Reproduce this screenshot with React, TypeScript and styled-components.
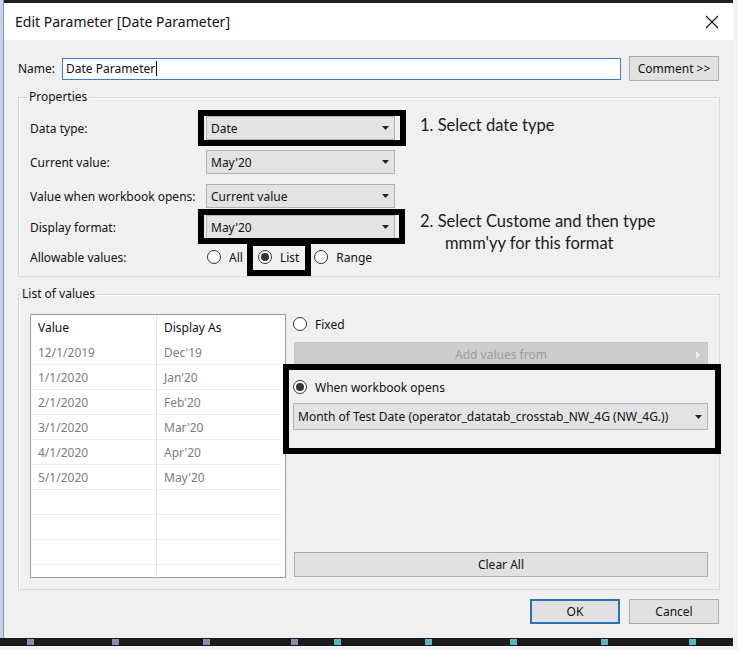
import React from "react";
import styled, { createGlobalStyle } from "styled-components";

const Global = createGlobalStyle`
  html, body { margin: 0; padding: 0; background: #f4f4f4; }
  body { font-family: "Noto Sans", "Open Sans", sans-serif; font-size: 12px; color: #111; }
  * { box-sizing: border-box; }
`;

const Screen = styled.div`
  width: 738px;
  height: 650px;
  display: flex;
  flex-direction: column;
  background: #f4f4f4;
  overflow: hidden;
`;

const WindowRow = styled.div`
  display: flex;
  height: 638px;
`;

const LeftEdge = styled.div`
  width: 4px;
  background: #c9d1e2;
  border-right: 1px solid #8493b4;
`;

const Dialog = styled.div`
  width: 729px;
  display: flex;
  flex-direction: column;
  border-top: 3px solid #1f1f29;
`;

const TitleBar = styled.div`
  height: 37px;
  background: #ffffff;
  display: flex;
  align-items: center;
  justify-content: space-between;
  padding: 0 14px 0 11px;
`;

const Title = styled.div`
  font-size: 14px;
  color: #111;
`;

const Body = styled.div`
  flex: 1;
  background: #f0f0f0;
  padding: 16px 13px 0 14px;
  display: flex;
  flex-direction: column;
`;

const NameRow = styled.div`
  display: flex;
  align-items: center;
  height: 25px;
`;

const NameLabel = styled.div`
  width: 44px;
`;

const NameInput = styled.div`
  width: 559px;
  height: 22px;
  border: 1px solid #3a80c0;
  background: #fff;
  display: flex;
  align-items: center;
  padding-left: 3px;
`;

const Caret = styled.span`
  display: inline-block;
  width: 1px;
  height: 15px;
  background: #000;
  margin-left: 1px;
`;

const Button = styled.div<{ $w?: number; $primary?: boolean }>`
  width: ${(p) => p.$w ?? 90}px;
  height: 25px;
  background: #e1e1e1;
  border: ${(p) => (p.$primary ? "2px solid #2b72b8" : "1px solid #adadad")};
  display: flex;
  align-items: center;
  justify-content: center;
  color: #111;
`;

const CommentButton = styled(Button)`
  margin-left: 8px;
`;

const Group = styled.div<{ $mt: number }>`
  position: relative;
  margin-top: ${(p) => p.$mt}px;
  border: 1px solid #d8d8d8;
  box-shadow: inset 1px 1px 0 #fbfbfb;
`;

const Legend = styled.span<{ $left: number }>`
  position: absolute;
  top: -10px;
  left: ${(p) => p.$left}px;
  padding: 0 2px;
  background: #f0f0f0;
  line-height: 18px;
`;

const PropGrid = styled.div`
  display: grid;
  grid-template-columns: 176px 189px auto;
  grid-template-rows: 34px 34px 34px 28px 32px;
  align-items: center;
  padding: 13px 11px 3px 11px;
`;

const Label = styled.div`
  grid-column: 1;
`;

const Annotation = styled.div<{ $row: string; $mt: number }>`
  grid-column: 3;
  grid-row: ${(p) => p.$row};
  align-self: start;
  margin-top: ${(p) => p.$mt}px;
  margin-left: 25px;
  font-family: "Lato", "Noto Sans", sans-serif;
  font-size: 16.5px;
  line-height: 22px;
  color: #1a1a1a;
`;

const Indent = styled.div`
  padding-left: 25px;
`;

const Highlight = styled.div<{ $t: number; $r: number; $b: number; $l: number }>`
  position: relative;
  &::after {
    content: "";
    position: absolute;
    top: ${(p) => p.$t}px;
    right: ${(p) => p.$r}px;
    bottom: ${(p) => p.$b}px;
    left: ${(p) => p.$l}px;
    border: 6px solid #000;
    pointer-events: none;
  }
`;

const SelectBox = styled.div<{ $h?: number }>`
  height: ${(p) => p.$h ?? 24}px;
  background: #e3e3e3;
  border: 1px solid #b3b3b3;
  display: flex;
  align-items: center;
  justify-content: space-between;
  padding: 0 5px 0 4px;
  color: #111;
  white-space: nowrap;
`;

const DownArrow = () => (
  <svg width="7" height="4" viewBox="0 0 7 4">
    <polygon points="0,0 7,0 3.5,4" fill="#222" />
  </svg>
);

const Select = ({ value, h }: { value: string; h?: number }) => (
  <SelectBox $h={h}>
    <span>{value}</span>
    <DownArrow />
  </SelectBox>
);

const RadioGroup = styled.div`
  display: flex;
  align-items: center;
  gap: 15px;
  margin-left: 1px;
  white-space: nowrap;
`;

const RadioItem = styled.div`
  display: flex;
  align-items: center;
  gap: 8px;
  height: 16px;
`;

const Circle = styled.span<{ $on?: boolean }>`
  width: 14px;
  height: 14px;
  border-radius: 50%;
  border: 1px solid #333;
  background: #fff;
  display: flex;
  align-items: center;
  justify-content: center;
  flex: none;
  &::after {
    content: "";
    width: 8px;
    height: 8px;
    border-radius: 50%;
    background: ${(p) => (p.$on ? "#333" : "transparent")};
  }
`;

const Radio = ({ label, on }: { label: string; on?: boolean }) => (
  <RadioItem>
    <Circle $on={on} />
    <span>{label}</span>
  </RadioItem>
);

const ListLayout = styled.div`
  display: flex;
  padding: 19px 11px 11px 11px;
`;

const Table = styled.div`
  width: 256px;
  height: 264px;
  border: 1px solid #9d9d9d;
  background: #fff;
  overflow: hidden;
`;

const TRow = styled.div<{ $head?: boolean }>`
  display: grid;
  grid-template-columns: 126px 1fr;
  height: 25px;
  border-bottom: 1px solid ${(p) => (p.$head ? "transparent" : "#ececec")};
  margin-right: 4px;
  color: ${(p) => (p.$head ? "#111" : "#7d7d7d")};
`;

const TCell = styled.div`
  display: flex;
  align-items: center;
  padding-left: 7px;
  &:first-child {
    border-right: 1px solid #e4e4e4;
  }
`;

const RightCol = styled.div`
  width: 415px;
  margin-left: 7px;
  display: flex;
  flex-direction: column;
`;

const RadioRow = styled.div<{ $mt: number }>`
  height: 20px;
  display: flex;
  align-items: center;
  margin-top: ${(p) => p.$mt}px;
`;

const WideButton = styled.div<{ $disabled?: boolean; $mt?: number; $mb?: number }>`
  margin-left: 1px;
  margin-top: ${(p) => (p.$mt === undefined ? "auto" : `${p.$mt}px`)};
  margin-bottom: ${(p) => p.$mb ?? 0}px;
  height: 25px;
  background: ${(p) => (p.$disabled ? "#cdcdcd" : "#e1e1e1")};
  border: 1px solid ${(p) => (p.$disabled ? "#c4c4c4" : "#adadad")};
  color: ${(p) => (p.$disabled ? "#9c9c9c" : "#111")};
  display: flex;
  align-items: center;
  justify-content: center;
  position: relative;
`;

const SideArrow = styled.span`
  position: absolute;
  right: 7px;
  top: 8px;
  width: 0;
  height: 0;
  border-top: 4px solid transparent;
  border-bottom: 4px solid transparent;
  border-left: 4px solid #f2f2f2;
`;

const WhenSelectWrap = styled.div`
  margin-top: 6px;
`;

const Footer = styled.div`
  display: flex;
  justify-content: flex-end;
  gap: 9px;
  margin-top: 9px;
  padding-right: 1px;
`;

const Taskbar = styled.div`
  position: relative;
  width: 733px;
  height: 8px;
  background: #1c1c1e;
`;

const Mark = styled.span<{ $left: number; $teal?: boolean }>`
  position: absolute;
  left: ${(p) => p.$left}px;
  top: 1px;
  width: 7px;
  height: 6px;
  background: ${(p) => (p.$teal ? "#5fb4b6" : "#8c8caa")};
`;

const marks: { x: number; teal?: boolean }[] = [
  { x: 27 },
  { x: 112 },
  { x: 203 },
  { x: 291 },
  { x: 334, teal: true },
  { x: 425, teal: true },
  { x: 510, teal: true },
  { x: 601, teal: true },
  { x: 689, teal: true },
];

const rows: [string, string][] = [
  ["12/1/2019", "Dec'19"],
  ["1/1/2020", "Jan'20"],
  ["2/1/2020", "Feb'20"],
  ["3/1/2020", "Mar'20"],
  ["4/1/2020", "Apr'20"],
  ["5/1/2020", "May'20"],
  ["", ""],
  ["", ""],
  ["", ""],
  ["", ""],
];

const CloseIcon = () => (
  <svg width="14" height="14" viewBox="0 0 14 14">
    <path d="M1 1 L13 13 M13 1 L1 13" stroke="#111" strokeWidth="1.1" />
  </svg>
);

export default function App() {
  return (
    <Screen>
      <Global />
      <WindowRow>
        <LeftEdge />
        <Dialog>
          <TitleBar>
            <Title>Edit Parameter [Date Parameter]</Title>
            <CloseIcon />
          </TitleBar>
          <Body>
            <NameRow>
              <NameLabel>Name:</NameLabel>
              <NameInput>
                Date Parameter
                <Caret />
              </NameInput>
              <CommentButton>Comment &gt;&gt;</CommentButton>
            </NameRow>

            <Group $mt={16}>
              <Legend $left={8}>Properties</Legend>
              <PropGrid>
                <Label>Data type:</Label>
                <Highlight $t={-6} $r={-11} $b={-6} $l={-8}>
                  <Select value="Date" />
                </Highlight>
                <Annotation $row="1" $mt={3}>
                  1. Select date type
                </Annotation>

                <Label>Current value:</Label>
                <Select value="May'20" />

                <Label>Value when workbook opens:</Label>
                <Select value="Current value" />

                <Label>Display format:</Label>
                <Highlight $t={-6} $r={-10} $b={-5} $l={-8}>
                  <Select value="May'20" />
                </Highlight>
                <Annotation $row="4 / 6" $mt={-3}>
                  2. Select Custome and then type
                  <Indent>mmm'yy for this format</Indent>
                </Annotation>

                <Label>Allowable values:</Label>
                <RadioGroup>
                  <Radio label="All" />
                  <Highlight $t={-9} $r={-12} $b={-11} $l={-11}>
                    <Radio label="List" on />
                  </Highlight>
                  <Radio label="Range" />
                </RadioGroup>
              </PropGrid>
            </Group>

            <Group $mt={17}>
              <Legend $left={1}>List of values</Legend>
              <ListLayout>
                <Table>
                  <TRow $head>
                    <TCell>Value</TCell>
                    <TCell>Display As</TCell>
                  </TRow>
                  {rows.map(([v, d], i) => (
                    <TRow key={i}>
                      <TCell>{v}</TCell>
                      <TCell>{d}</TCell>
                    </TRow>
                  ))}
                </Table>
                <RightCol>
                  <RadioRow $mt={0}>
                    <Radio label="Fixed" />
                  </RadioRow>
                  <WideButton $disabled $mt={8}>
                    Add values from
                    <SideArrow />
                  </WideButton>
                  <Highlight $t={-3} $r={-13} $b={-24} $l={-10}>
                    <RadioRow $mt={10}>
                      <Radio label="When workbook opens" on />
                    </RadioRow>
                    <WhenSelectWrap>
                      <Select value="Month of Test Date (operator_datatab_crosstab_NW_4G (NW_4G.))" h={27} />
                    </WhenSelectWrap>
                  </Highlight>
                  <WideButton $mb={1}>Clear All</WideButton>
                </RightCol>
              </ListLayout>
            </Group>

            <Footer>
              <Button $primary>OK</Button>
              <Button>Cancel</Button>
            </Footer>
          </Body>
        </Dialog>
      </WindowRow>
      <Taskbar>
        {marks.map((m, i) => (
          <Mark key={i} $left={m.x} $teal={m.teal} />
        ))}
      </Taskbar>
    </Screen>
  );
}
